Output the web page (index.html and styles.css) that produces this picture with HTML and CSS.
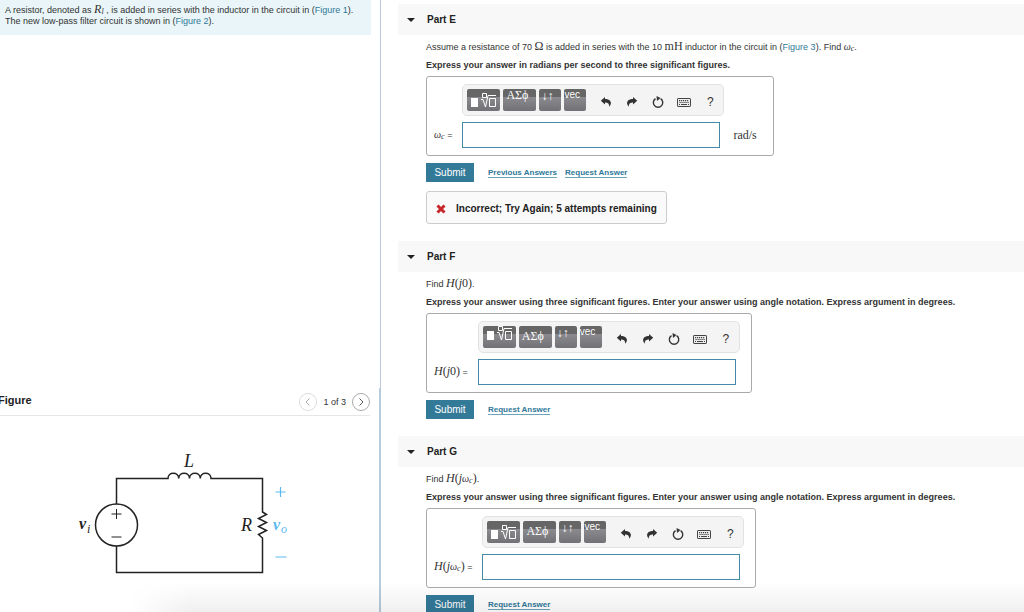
FILE: index.html
```html
<!DOCTYPE html>
<html lang="en">
<head>
  <meta charset="UTF-8">
  <meta name="viewport" content="width=device-width, initial-scale=1.0">
  <title>Low-pass filter problem</title>
  <link rel="stylesheet" href="styles.css">
</head>
<body>
  <!-- Shared icons -->
  <svg class="sprite" aria-hidden="true">
    <symbol id="undo" viewBox="0 0 12 12">
      <path d="M5 1 .8 4.800 5 8.600V6.600c2.400 0 4.200.6 4.200 4.200 3.600-4.300 1.200-7.900-4.200-7.900Z" fill="#333"/>
    </symbol>
    <symbol id="redo" viewBox="0 0 12 12">
      <path d="M7 1l4.200 3.800L7 8.600V6.600c-2.400 0-4.200.6-4.200 4.200C-.8 6.500 1.600 2.900 7 2.900Z" fill="#333"/>
    </symbol>
    <symbol id="reset" viewBox="0 0 12 12">
      <path d="M3.500 2.600A4.700 4.700 0 1 0 8.600 2.600" fill="none" stroke="#333" stroke-width="1.400"/>
      <path d="M4.500 0 8.500 2 5 5Z" fill="#333"/>
    </symbol>
    <symbol id="keyboard" viewBox="0 0 14 9">
      <rect x=".5" y=".5" width="13" height="8" rx=".6" fill="#eee" stroke="#444"/>
      <path d="M2 2.700h10M2.500 4.500h10" stroke="#444" stroke-width="1.200" stroke-dasharray="1.200 .8"/>
      <path d="M2 6.500h1M4 6.500h6M11 6.500h1" stroke="#444"/>
    </symbol>
    <symbol id="template" viewBox="0 0 25 16">
      <rect x="0" y="5" width="7" height="9" fill="#fff"/>
      <path d="M11.500.5h4v4h-4zM10 6.500h2l2.500 7.500L17 2.500h8M18.500 5.500h6v8h-6z" fill="none" stroke="#fff"/>
    </symbol>
  </svg>

  <div class="page">
    <!-- Left side: problem text and figure -->
    <aside class="side">
      <div class="intro-wrap">
        <p class="intro">A resistor, denoted as <i class="math">R<sub>l</sub></i> , is added in series with the inductor in the circuit in (<a href="#figure">Figure 1</a>).<br>
        The new low-pass filter circuit is shown in (<a href="#figure">Figure 2</a>).</p>
      </div>

      <section class="figure" id="figure">
        <div class="figure-head">
          <h2>Figure</h2>
          <div class="pager">
            <button type="button" class="pager-btn" aria-label="Previous figure" disabled><svg viewBox="0 0 10 10"><path d="M6.500 1.500 3 5l3.500 3.500"/></svg></button>
            <span>1 of 3</span>
            <button type="button" class="pager-btn" aria-label="Next figure"><svg viewBox="0 0 10 10"><path d="M3.500 1.500 7 5 3.500 8.500"/></svg></button>
          </div>
        </div>
        <svg class="circuit" viewBox="0 416 370 196">
          <g fill="none" stroke="#222" stroke-width="1.500">
            <path d="M116.500 504v-25.500h51.500c0-7 10.700-7 10.700 0c0-7 10.800-7 10.800 0c0-7 10.800-7 10.800 0c0-7 10.700-7 10.700 0h51.500V512l4 2.500-8 4 8 4-8 4 8 4-8 4 4 3.500v34.500h-146V546"/>
            <circle cx="116.500" cy="525" r="21"/>
            <path d="M111.500 514h10M116.500 509v10M111.500 537h10" stroke-width="1"/>
          </g>
          <path d="M275.500 492h10M280.500 487v10M275.500 557h11" stroke="#5ab9f0" stroke-width="1.200"/>
          <g class="circuit-text">
            <text x="184" y="467">L</text>
            <text x="241" y="531">R</text>
            <text x="79" y="529" class="bold">v</text>
            <text x="87" y="533" class="small">i</text>
            <text x="273" y="530" class="bold blue">v</text>
            <text x="281" y="533" class="small blue">o</text>
          </g>
        </svg>
      </section>
    </aside>

    <!-- Right side: question parts -->
    <main class="parts">
      <section class="part">
        <button type="button" class="part-head">Part E</button>
        <form class="part-body">
          <p>Assume a resistance of 70 <span class="math">Ω</span> is added in series with the 10 <span class="math">mH</span> inductor in the circuit in (<a href="#figure">Figure 3</a>). Find <i class="math omega">ω<sub>c</sub></i>.</p>
          <p class="hint">Express your answer in radians per second to three significant figures.</p>
          <div class="answer">
            <div class="toolbar">
              <button type="button" class="tool wide low" aria-label="Templates"><svg><use href="#template"/></svg></button>
              <button type="button" class="tool wide greek">ΑΣϕ</button>
              <button type="button" class="tool arrows">↓↑</button>
              <button type="button" class="tool vec">vec</button>
              <div class="icons">
                <button type="button" class="icon" aria-label="Undo"><svg><use href="#undo"/></svg></button>
                <button type="button" class="icon" aria-label="Redo"><svg><use href="#redo"/></svg></button>
                <button type="button" class="icon" aria-label="Reset"><svg><use href="#reset"/></svg></button>
                <button type="button" class="icon keys" aria-label="Keyboard"><svg><use href="#keyboard"/></svg></button>
                <button type="button" class="icon">?</button>
              </div>
            </div>
            <label for="answerE"><i class="math omega">ω<sub>c</sub></i> =</label>
            <input type="text" id="answerE" name="answerE">
            <span class="unit">rad/s</span>
          </div>
          <div class="actions">
            <button type="submit" class="submit">Submit</button>
            <a href="#">Previous Answers</a>
            <a href="#">Request Answer</a>
          </div>
          <div class="feedback">
            <svg viewBox="0 0 10 10"><path d="M1.500 1.500l7 7M8.500 1.500l-7 7"/></svg>
            Incorrect; Try Again; 5 attempts remaining
          </div>
        </form>
      </section>

      <section class="part">
        <button type="button" class="part-head">Part F</button>
        <form class="part-body">
          <p>Find <span class="math"><i>H</i>(<i>j</i>0)</span>.</p>
          <p class="hint">Express your answer using three significant figures. Enter your answer using angle notation. Express argument in degrees.</p>
          <div class="answer">
            <div class="toolbar">
              <button type="button" class="tool wide" aria-label="Templates"><svg><use href="#template"/></svg></button>
              <button type="button" class="tool wide greek mid">ΑΣϕ</button>
              <button type="button" class="tool arrows">↓↑</button>
              <button type="button" class="tool vec">vec</button>
              <div class="icons">
                <button type="button" class="icon" aria-label="Undo"><svg><use href="#undo"/></svg></button>
                <button type="button" class="icon" aria-label="Redo"><svg><use href="#redo"/></svg></button>
                <button type="button" class="icon" aria-label="Reset"><svg><use href="#reset"/></svg></button>
                <button type="button" class="icon keys" aria-label="Keyboard"><svg><use href="#keyboard"/></svg></button>
                <button type="button" class="icon">?</button>
              </div>
            </div>
            <label for="answerF"><span class="math"><i>H</i>(<i>j</i>0)</span> =</label>
            <input type="text" id="answerF" name="answerF">
          </div>
          <div class="actions">
            <button type="submit" class="submit">Submit</button>
            <a href="#">Request Answer</a>
          </div>
        </form>
      </section>

      <section class="part">
        <button type="button" class="part-head">Part G</button>
        <form class="part-body">
          <p>Find <span class="math"><i>H</i>(<i>j<span class="omega">ω<sub>c</sub></span></i>)</span>.</p>
          <p class="hint">Express your answer using three significant figures. Enter your answer using angle notation. Express argument in degrees.</p>
          <div class="answer">
            <div class="toolbar">
              <button type="button" class="tool wide low" aria-label="Templates"><svg><use href="#template"/></svg></button>
              <button type="button" class="tool wide greek mid">ΑΣϕ</button>
              <button type="button" class="tool arrows">↓↑</button>
              <button type="button" class="tool vec">vec</button>
              <div class="icons">
                <button type="button" class="icon" aria-label="Undo"><svg><use href="#undo"/></svg></button>
                <button type="button" class="icon" aria-label="Redo"><svg><use href="#redo"/></svg></button>
                <button type="button" class="icon" aria-label="Reset"><svg><use href="#reset"/></svg></button>
                <button type="button" class="icon keys" aria-label="Keyboard"><svg><use href="#keyboard"/></svg></button>
                <button type="button" class="icon">?</button>
              </div>
            </div>
            <label for="answerG"><span class="math"><i>H</i>(<i>j<span class="omega">ω<sub>c</sub></span></i>)</span> =</label>
            <input type="text" id="answerG" name="answerG">
          </div>
          <div class="actions">
            <button type="submit" class="submit">Submit</button>
            <a href="#">Request Answer</a>
          </div>
        </form>
      </section>
    </main>
  </div>
  <div class="bottom-shade"></div>
</body>
</html>
```

FILE: styles.css
```css
* {
  box-sizing: border-box;
}

body {
  margin: 0;
  font-family: "Liberation Sans", Arial, sans-serif;
  font-size: 9px;
  line-height: 12px;
  color: #333;
  background: #fff;
}

button {
  font-family: inherit;
  border: none;
  padding: 0;
  cursor: pointer;
}

p,
h2 {
  margin: 0;
}

a {
  color: #2f7899;
  text-decoration: none;
}

.sprite {
  display: none;
}

.page {
  display: flex;
  height: 100vh;
}

/* Left side */
.side {
  flex: 0 0 381px;
  display: flex;
  flex-direction: column;
  border-right: 1px solid #b8cbdc;
  overflow: hidden;
}

.intro-wrap {
  flex: 1;
  padding-right: 9px;
}

.intro {
  padding: 5px 5px 8px;
  line-height: 11px;
  min-height: 35px;
  background: #e9f5f8;
}

.figure {
  flex: none;
  padding-right: 9px;
  border-right: 1px solid #b8cbdc;
}

.figure-head {
  display: flex;
  justify-content: space-between;
  align-items: center;
  height: 28px;
  border-bottom: 1px solid #e6e6e6;
}

.figure-head h2 {
  margin-left: -2px;
  padding-bottom: 4px;
  font-size: 11px;
  color: #222;
}

.pager {
  display: flex;
  align-items: center;
  gap: 6px;
}

.pager-btn {
  display: flex;
  width: 18px;
  height: 18px;
  align-items: center;
  justify-content: center;
  border: 1px solid #aaa;
  border-radius: 50%;
  background: #fff;
}

.pager-btn svg {
  width: 10px;
  height: 10px;
  fill: none;
  stroke: #555;
}

.pager-btn:disabled {
  border-color: #ddd;
}

.pager-btn:disabled svg {
  stroke: #aaa;
}

.circuit {
  display: block;
  width: 100%;
}

.circuit-text {
  font-family: "Liberation Serif", serif;
  font-style: italic;
  font-size: 18px;
  fill: #222;
}

.circuit-text .bold {
  font-size: 16px;
  font-weight: bold;
}

.circuit-text .small {
  font-size: 12px;
}

.circuit-text .blue {
  fill: #5ab9f0;
}

/* Math */
.math {
  font-family: "Liberation Serif", serif;
  font-size: 12px;
  line-height: 1px;
}

.omega {
  font-size: 10px;
}

.math sub {
  font-size: 8px;
  line-height: 1px;
  vertical-align: -1px;
}

/* Right side */
.parts {
  flex: 1;
  padding: 4px 0 0 17px;
  overflow-y: auto;
  scrollbar-width: none;
}

.part-head {
  display: flex;
  align-items: center;
  gap: 12px;
  width: 100%;
  height: 31px;
  padding-left: 9px;
  font-size: 10px;
  font-weight: bold;
  color: #222;
  background: #f8f8f8;
}

.part-head::before {
  content: "";
  border: 4px solid transparent;
  border-top-color: #222;
  border-bottom: none;
}

.part-body {
  padding: 6px 0 17px 28px;
}

.part-body p {
  line-height: 12px;
}

.part-body .hint {
  margin: 6px 0 5px;
  font-weight: bold;
}

.answer {
  display: inline-grid;
  grid-template-columns: auto 262px auto;
  align-items: center;
  row-gap: 6px;
  padding: 7px 11px 7px 7px;
  border: 1px solid #aaa;
  border-radius: 3px;
  vertical-align: top;
}

.answer label {
  grid-column: 1;
  padding-right: 10px;
}

.answer input {
  width: 258px;
  height: 26px;
  padding: 0 6px;
  border: 1px solid #4489a8;
  background: #fff;
}

.unit {
  padding: 0 5px 0 9px;
  font-family: "Liberation Serif", serif;
  font-size: 12px;
}

.toolbar {
  grid-column: 2;
  display: flex;
  gap: 3px;
  height: 32px;
  padding: 4px 0 4px 4px;
  border: 1px solid #e2e2e2;
  border-radius: 5px;
  background: #f4f4f4;
}

.tool {
  display: flex;
  width: 22px;
  height: 22px;
  padding-left: 2px;
  overflow: hidden;
  border-radius: 2px;
  font-size: 10px;
  line-height: 12px;
  color: #fff;
  background: linear-gradient(#666 0 8px, #8b8a8f 8px, #727176);
}

.tool.wide {
  width: 33px;
  padding-left: 4px;
}

.tool svg {
  width: 25px;
  height: 16px;
}

.tool.low {
  padding-top: 4px;
}

.tool.greek {
  padding-left: 3px;
  font-family: "Liberation Serif", "DejaVu Serif", serif;
  font-size: 12px;
}

.tool.mid {
  padding-top: 4px;
}

.tool.arrows {
  padding-top: 1px;
  font-size: 12px;
}

.tool.vec {
  padding-left: 0;
}

.icons {
  display: flex;
  flex: 1;
  padding-left: 4px;
}

.icon {
  display: flex;
  flex: 1;
  align-items: center;
  justify-content: center;
  padding-top: 4px;
  font-size: 12px;
  color: #333;
  background: none;
}

.icon svg {
  width: 12px;
  height: 12px;
}

.icon.keys svg {
  width: 14px;
  height: 9px;
}

.actions {
  display: flex;
  align-items: center;
  gap: 8px;
  margin-top: 7px;
  font-size: 8px;
  font-weight: bold;
}

.actions a {
  line-height: 9px;
  border-bottom: 1px solid #6fa3ba;
}

.submit {
  width: 48px;
  height: 19px;
  margin-right: 6px;
  font-size: 10px;
  color: #fff;
  background: #337a99;
}

.feedback {
  display: inline-flex;
  align-items: center;
  gap: 10px;
  height: 33px;
  margin-top: 9px;
  padding: 2px 9px 0;
  border: 1px solid #ccc;
  border-radius: 3px;
  font-size: 10px;
  font-weight: bold;
  color: #222;
  background: #fafafa;
  vertical-align: top;
}

.feedback svg {
  width: 10px;
  height: 10px;
  stroke: #c9252d;
  stroke-width: 3;
}

/* Soft shade over the bottom edge */
.bottom-shade {
  position: fixed;
  right: 0;
  bottom: 0;
  left: 130px;
  height: 30px;
  background: linear-gradient(transparent, rgba(0, 0, 0, 0.06));
  -webkit-mask-image: linear-gradient(90deg, transparent, #000 60px);
  mask-image: linear-gradient(90deg, transparent, #000 60px);
  pointer-events: none;
}
```
